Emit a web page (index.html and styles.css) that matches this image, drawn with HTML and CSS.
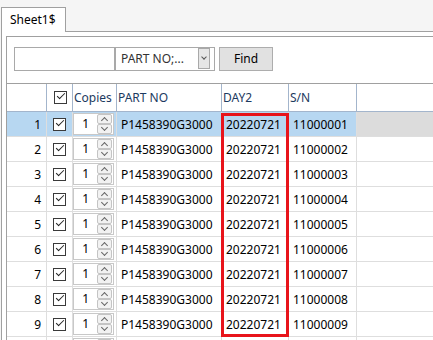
FILE: index.html
```html
<!DOCTYPE html>
<html>
    <head>
        <title>Sheet1$</title>
        <link rel="stylesheet" href="styles.css">
    </head>
    <body>
        <div class="tabs">
            <div class="tab">Sheet1$</div>
            <div class="tabfill"></div>
        </div>
        <div class="panel">
            <div class="frame">
                <div class="toolbar">
                    <div class="search"></div>
                    <div class="combo"><span>PART NO;...</span><b class="drop"></b></div>
                    <div class="find">Find</div>
                </div>

                <div class="grid">
                    <div class="row head">
                        <div></div>
                        <div class="chk"><i class="box"></i></div>
                        <div>Copies</div>
                        <div>PART NO</div>
                        <div>DAY2</div>
                        <div>S/N</div>
                        <div></div>
                    </div>
                    <div class="row sel">
                        <div class="num">1</div>
                        <div class="chk"><i class="box"></i></div>
                        <div><span class="spin"><span class="val">1</span><span class="btns"><b class="up"></b><b class="down"></b></span></span></div>
                        <div class="txt">P1458390G3000</div>
                        <div class="txt">20220721</div>
                        <div class="txt">11000001</div>
                        <div></div>
                    </div>
                    <div class="row">
                        <div class="num">2</div>
                        <div class="chk"><i class="box"></i></div>
                        <div><span class="spin"><span class="val">1</span><span class="btns"><b class="up"></b><b class="down"></b></span></span></div>
                        <div class="txt">P1458390G3000</div>
                        <div class="txt">20220721</div>
                        <div class="txt">11000002</div>
                        <div></div>
                    </div>
                    <div class="row">
                        <div class="num">3</div>
                        <div class="chk"><i class="box"></i></div>
                        <div><span class="spin"><span class="val">1</span><span class="btns"><b class="up"></b><b class="down"></b></span></span></div>
                        <div class="txt">P1458390G3000</div>
                        <div class="txt">20220721</div>
                        <div class="txt">11000003</div>
                        <div></div>
                    </div>
                    <div class="row">
                        <div class="num">4</div>
                        <div class="chk"><i class="box"></i></div>
                        <div><span class="spin"><span class="val">1</span><span class="btns"><b class="up"></b><b class="down"></b></span></span></div>
                        <div class="txt">P1458390G3000</div>
                        <div class="txt">20220721</div>
                        <div class="txt">11000004</div>
                        <div></div>
                    </div>
                    <div class="row">
                        <div class="num">5</div>
                        <div class="chk"><i class="box"></i></div>
                        <div><span class="spin"><span class="val">1</span><span class="btns"><b class="up"></b><b class="down"></b></span></span></div>
                        <div class="txt">P1458390G3000</div>
                        <div class="txt">20220721</div>
                        <div class="txt">11000005</div>
                        <div></div>
                    </div>
                    <div class="row">
                        <div class="num">6</div>
                        <div class="chk"><i class="box"></i></div>
                        <div><span class="spin"><span class="val">1</span><span class="btns"><b class="up"></b><b class="down"></b></span></span></div>
                        <div class="txt">P1458390G3000</div>
                        <div class="txt">20220721</div>
                        <div class="txt">11000006</div>
                        <div></div>
                    </div>
                    <div class="row">
                        <div class="num">7</div>
                        <div class="chk"><i class="box"></i></div>
                        <div><span class="spin"><span class="val">1</span><span class="btns"><b class="up"></b><b class="down"></b></span></span></div>
                        <div class="txt">P1458390G3000</div>
                        <div class="txt">20220721</div>
                        <div class="txt">11000007</div>
                        <div></div>
                    </div>
                    <div class="row">
                        <div class="num">8</div>
                        <div class="chk"><i class="box"></i></div>
                        <div><span class="spin"><span class="val">1</span><span class="btns"><b class="up"></b><b class="down"></b></span></span></div>
                        <div class="txt">P1458390G3000</div>
                        <div class="txt">20220721</div>
                        <div class="txt">11000008</div>
                        <div></div>
                    </div>
                    <div class="row">
                        <div class="num">9</div>
                        <div class="chk"><i class="box"></i></div>
                        <div><span class="spin"><span class="val">1</span><span class="btns"><b class="up"></b><b class="down"></b></span></span></div>
                        <div class="txt">P1458390G3000</div>
                        <div class="txt">20220721</div>
                        <div class="txt">11000009</div>
                        <div></div>
                    </div>
                    <!-- next row only peeks in at the bottom edge -->
                    <div class="row">
                        <div class="num"></div>
                        <div class="chk"><i class="box"></i></div>
                        <div><span class="spin"><span class="val"></span><span class="btns"><b class="up"></b><b class="down"></b></span></span></div>
                        <div class="txt"></div>
                        <div class="txt"></div>
                        <div class="txt"></div>
                        <div></div>
                    </div>

                    <!-- highlight round the DAY2 column -->
                    <div class="mark"></div>
                </div>
            </div>
        </div>
    </body>
</html>
```

FILE: styles.css
```css
body {
    margin: 0;
    height: 340px;
    overflow: hidden;
    background: #f5f5f5;
    font: 12px "Noto Sans", "Open Sans", sans-serif;
    color: #000;
}
    .tabs {
        display: flex;
        padding: 7px 0 0 1px;
    }
    .tab {
        box-sizing: border-box;
        width: 65px;
        height: 25px;
        padding-left: 8px;
        border: 1px solid #a0a0a0;
        border-bottom: 0;
        background: #fff;
        line-height: 24px;
    }
    .tabfill {
        flex: 1;
        box-sizing: border-box;
        height: 25px;
        border-bottom: 1px solid #a0a0a0;
    }
    .panel {
        margin-left: 1px;
        padding: 4px 0 0 4px;
        border-left: 1px solid #a0a0a0;
        background: #fff;
        height: 400px;
    }
    .frame {
        border-top: 1px solid #a0a0a0;
        border-left: 1px solid #a0a0a0;
        height: 100%;
    }

    /* search bar */
    .toolbar {
        display: flex;
        padding: 10px 0 0 7px;
    }
    .search, .combo, .find {
        box-sizing: border-box;
        height: 24px;
        border: 1px solid #a9a9a9;
    }
    .search {
        width: 101px;
    }
    .combo {
        display: flex;
        width: 100px;
        padding-left: 5px;
        color: #333;
        line-height: 22px;
    }
    .drop {
        position: relative;
        box-sizing: border-box;
        width: 12px;
        height: 21px;
        margin-left: auto;
        margin-right: 4px;
        border: 1px solid #a9a9a9;
        background: #e6e6e6;
    }
    .drop:before {
        content: '';
        position: absolute;
        left: 3px;
        top: 6px;
        width: 3px;
        height: 3px;
        border-right: 1px solid #555;
        border-bottom: 1px solid #555;
        transform: rotate(45deg);
    }
    .find {
        width: 54px;
        margin-left: 4px;
        border-color: #adadad;
        background: #e1e1e1;
        text-align: center;
        line-height: 22px;
    }

    /* data grid */
    .grid {
        position: relative;
        margin-top: 12px;
    }
    .row {
        display: grid;
        grid-template-columns: 40px 26px 44px 105px 67px 68px 1fr;
        box-sizing: border-box;
        height: 25px;
        border-bottom: 1px solid #dedede;
    }
    .row > div {
        display: flex;
        align-items: center;
        box-sizing: border-box;
        border-right: 1px solid #dedede;
        white-space: nowrap;
    }
    .row > div:last-child {
        border-right: 0;
    }
    .head {
        height: 29px;
        border-top: 1px solid #a0a0a0;
        border-bottom-color: #a3b5cc;
    }
    .head > div {
        padding-left: 1px;
        color: #1c3a60;
        border-right-color: #a3b5cc !important;
    }
    .head > div:last-child {
        border-right: 0;
    }
    .sel > div {
        background: #b7d7f1;
    }
    .sel > div:last-child {
        background: #dcdcdc;
    }
    .num {
        justify-content: flex-end;
        padding-right: 5px;
    }
    .row > .chk {
        justify-content: center;
    }
    .txt {
        padding-left: 4px;
    }

    .box {
        position: relative;
        box-sizing: border-box;
        width: 13px;
        height: 13px;
        border: 1px solid #3a3a3a;
        background: #fff;
    }
    .box:after {
        content: '';
        position: absolute;
        left: 2px;
        top: 1px;
        width: 7px;
        height: 3px;
        border-left: 1.5px solid #222;
        border-bottom: 1.5px solid #222;
        transform: rotate(-45deg);
    }

    .spin {
        display: flex;
        box-sizing: border-box;
        width: 41px;
        height: 22px;
        border: 1px solid #c8c8c8;
        background: #fff;
    }
    .val {
        flex: 1;
        padding-right: 8px;
        text-align: right;
        line-height: 20px;
    }
    .btns {
        display: flex;
        flex-direction: column;
        width: 15px;
        margin-right: 1px;
    }
    .btns b {
        position: relative;
        box-sizing: border-box;
        height: 10px;
        border: 1px solid #c4c4c4;
        border-radius: 2px;
        background: #f2f2f2;
    }
    .btns b:before {
        content: '';
        position: absolute;
        left: 4px;
        width: 4px;
        height: 4px;
        border-top: 1px solid #666;
        border-left: 1px solid #666;
    }
    .btns .up:before {
        top: 3px;
        transform: rotate(45deg);
    }
    .btns .down:before {
        top: 0;
        transform: rotate(225deg);
    }

    .mark {
        position: absolute;
        left: 214px;
        top: 30px;
        box-sizing: border-box;
        width: 68px;
        height: 224px;
        border: 3px solid #e8141b;
    }
```
